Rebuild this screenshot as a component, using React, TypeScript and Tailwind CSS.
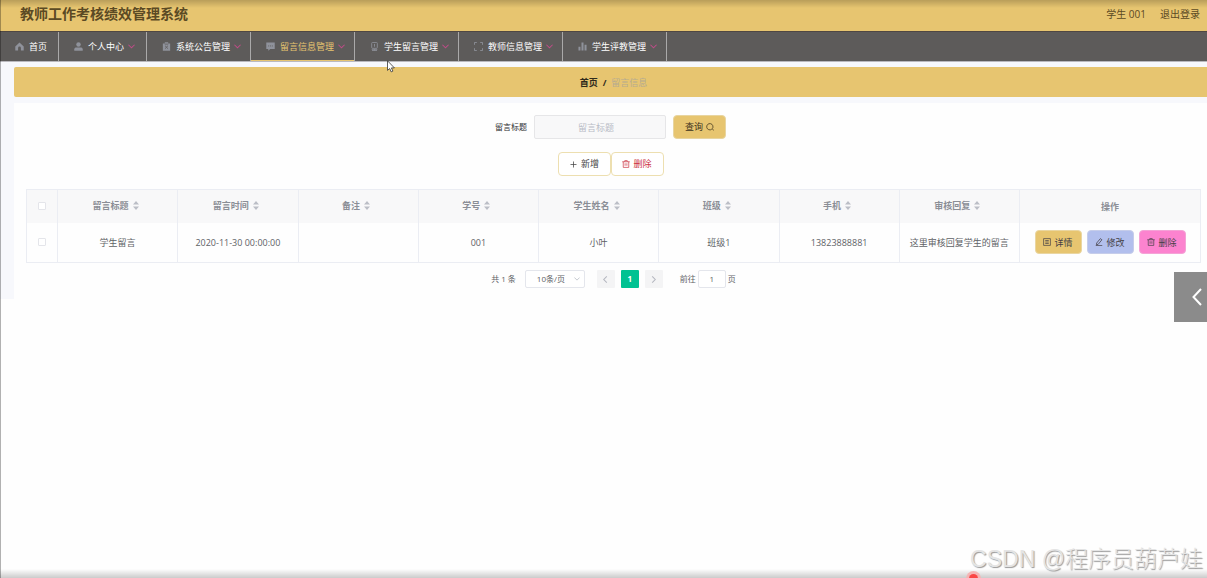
import { useState } from 'react';
import type { ReactNode } from 'react';
import { Plus } from 'lucide-react';

interface MenuItem {
  label: string;
  icon: ReactNode;
  active?: boolean;
  expandable?: boolean;
}

interface Message {
  title: string;
  time: string;
  remark: string;
  studentNo: string;
  studentName: string;
  className: string;
  phone: string;
  reply: string;
}

const menuItems: MenuItem[] = [
  {
    label: '首页',
    icon: <path d="M8 1 15.5 8v7h-5v-4.5a2.5 2.5 0 0 0-5 0V15h-5V8z" fill="currentColor" />,
  },
  {
    label: '个人中心',
    expandable: true,
    icon: (
      <g fill="currentColor">
        <circle cx="8" cy="4.6" r="4" />
        <path d="M.5 15.5v-2.4c0-2.2 1.7-3.4 3.8-3.4h7.4c2.1 0 3.8 1.2 3.8 3.4v2.4z" />
      </g>
    ),
  },
  {
    label: '系统公告管理',
    expandable: true,
    icon: (
      <>
        <path d="M1.5 2.5H5V.5h6v2h3.5v13h-13z" fill="currentColor" />
        <path d="M5.3 6.5l5.4 5.4M10.7 6.5l-5.4 5.4M5 3.8h6" stroke="#5d5b5a" strokeWidth="1.4" fill="none" />
      </>
    ),
  },
  {
    label: '留言信息管理',
    active: true,
    expandable: true,
    icon: (
      <>
        <path d="M.5 1h15v11.3H7.6L4 15.5v-3.2H.5z" fill="currentColor" />
        <path d="M4 7h1.6M7.2 7h1.6M10.4 7H12" stroke="#5d5b5a" strokeWidth="1.6" />
      </>
    ),
  },
  {
    label: '学生留言管理',
    expandable: true,
    icon: (
      <g fill="none" stroke="currentColor" strokeWidth="1.5">
        <rect x="3" y=".8" width="10" height="10.4" rx="1.5" />
        <path d="M8 3.4v5M3 13h10M8 13v2M3.5 15.2h9" />
      </g>
    ),
  },
  {
    label: '教师信息管理',
    expandable: true,
    icon: (
      <path
        d="M.8 5V.8H5M11 .8h4.2V5M15.2 11v4.2H11M5 15.2H.8V11"
        fill="none"
        stroke="currentColor"
        strokeWidth="1.6"
      />
    ),
  },
  {
    label: '学生评教管理',
    expandable: true,
    icon: <path d="M.8 8.5h3.6V15H.8zM6.2 1h3.6v14H6.2zM11.6 5h3.6v10h-3.6z" fill="currentColor" />,
  },
];

const columns: { key: keyof Message; label: string }[] = [
  { key: 'title', label: '留言标题' },
  { key: 'time', label: '留言时间' },
  { key: 'remark', label: '备注' },
  { key: 'studentNo', label: '学号' },
  { key: 'studentName', label: '学生姓名' },
  { key: 'className', label: '班级' },
  { key: 'phone', label: '手机' },
  { key: 'reply', label: '审核回复' },
];

const messages: Message[] = [
  {
    title: '学生留言',
    time: '2020-11-30 00:00:00',
    remark: '',
    studentNo: '001',
    studentName: '小叶',
    className: '班级1',
    phone: '13823888881',
    reply: '这里审核回复学生的留言',
  },
];

function Icon({ children, className = 'size-2' }: { children: ReactNode; className?: string }) {
  return (
    <svg viewBox="0 0 16 16" className={`shrink-0 ${className}`} aria-hidden="true">
      {children}
    </svg>
  );
}

const arrows = {
  down: 'M1 4l7 7 7-7',
  left: 'M11 1L4 8l7 7',
  right: 'M5 1l7 7-7 7',
};

function Arrow({ dir, className }: { dir: keyof typeof arrows; className: string }) {
  return (
    <Icon className={className}>
      <path d={arrows[dir]} fill="none" stroke="currentColor" strokeWidth="2.4" />
    </Icon>
  );
}

const trashPath = (
  <path
    d="M.5 3.5h15M5.5 3.5V1.2h5v2.3M2.5 3.5v11.3h11V3.5M6.2 6.5v5M9.8 6.5v5"
    fill="none"
    stroke="currentColor"
    strokeWidth="1.4"
  />
);

const detailPath = (
  <path d="M1.2 1.2h13.6v13.6H1.2zM4.5 5h7M4.5 8h7M4.5 11h7" fill="none" stroke="currentColor" strokeWidth="1.4" />
);

const editPath = (
  <path
    d="M10.8 1.2l3 2.4-7.4 9-3.6 1 .6-3.6zM1.5 15.2h13"
    fill="none"
    stroke="currentColor"
    strokeWidth="1.5"
  />
);

function TopBar() {
  return (
    <header className="flex h-[31px] items-center justify-between bg-[#e7c570] pr-[7px] pl-5 text-[#5b4a24]">
      <h1 className="pb-1 text-[14px] font-bold">教师工作考核绩效管理系统</h1>
      <div className="flex items-center gap-[14px] pb-[3px] text-[10px]">
        <span>学生 001</span>
        <button type="button">退出登录</button>
      </div>
    </header>
  );
}

function NavMenu() {
  return (
    <nav className="flex h-[31px] border-t border-b border-t-[#4f4743] border-b-[#bab9be] bg-[#5d5b5a] text-[9px]">
      {menuItems.map((item) => (
        <a
          key={item.label}
          href="#"
          className={`flex items-center border-r border-[#aaa9a9] pl-[15px] ${
            item.label.length > 4 ? 'pr-[9px]' : 'pr-[11px]'
          } ${item.active ? 'text-[#e7c570] shadow-[inset_0_-1px_0_#e7c570]' : 'text-white'}`}
        >
          <Icon className="size-[9px] text-[#8f929b]">{item.icon}</Icon>
          <span className="ml-[5px]">{item.label}</span>
          {item.expandable && <Arrow dir="down" className="ml-1 size-[7px] text-[#c04c88]" />}
        </a>
      ))}
    </nav>
  );
}

function SearchForm() {
  return (
    <>
      <form className="flex items-center justify-center gap-[7px]" onSubmit={(e) => e.preventDefault()}>
        <label htmlFor="title" className="text-[8px] text-[#303133]">
          留言标题
        </label>
        <input
          id="title"
          type="text"
          placeholder="留言标题"
          className="h-6 w-[132px] rounded-xs border border-[#e6e6e8] bg-[#f8f8f9] px-2 pr-4 text-center text-[9px] outline-none placeholder:text-[#b9bcc6]"
        />
        <button
          type="submit"
          className="flex h-6 w-[53px] items-center justify-center gap-[3px] rounded-[4px] border border-[#e8d5a0] bg-[#e7c570] text-[9px] text-[#3d331c]"
        >
          查询
          <Icon className="size-2">
            <path
              d="M11.6 12.4a6.3 6.3 0 1 1 1-1L15.4 15"
              fill="none"
              stroke="currentColor"
              strokeWidth="1.5"
            />
          </Icon>
        </button>
      </form>
      <div className="mt-[13px] flex justify-center text-[9px]">
        <button
          type="button"
          className="flex h-6 w-[53px] items-center justify-center gap-[3px] rounded-[4px] border border-[#eddfb0] bg-white text-[#444]"
        >
          <Plus className="size-[9px]" strokeWidth={2} />
          新增
        </button>
        <button
          type="button"
          className="flex h-6 w-[53px] items-center justify-center gap-[3px] rounded-[4px] border border-[#eddfb0] bg-white text-[#cc3342]"
        >
          <Icon>{trashPath}</Icon>
          删除
        </button>
      </div>
    </>
  );
}

function RowButton({ label, color, icon }: { label: string; color: string; icon: ReactNode }) {
  return (
    <button
      type="button"
      className={`flex h-6 w-[47px] items-center justify-center gap-[3px] rounded-[4px] border text-[#443f45] ${color}`}
    >
      <Icon>{icon}</Icon>
      {label}
    </button>
  );
}

const checkboxClass =
  'block mx-auto size-2 appearance-none rounded-[1px] border border-[#e4e5ea] bg-white checked:bg-[#00c292]';

function MessageTable() {
  return (
    <table className="mt-[13px] w-full table-fixed border-collapse border border-[#ebedf3] text-center text-[9px] text-[#606266]">
      <colgroup>
        <col className="w-[31px]" />
        {columns.map((col) => (
          <col key={col.key} />
        ))}
        <col className="w-[181px]" />
      </colgroup>
      <thead className="bg-[#f8f8f9] text-[#8b8e96]">
        <tr className="h-[33px]">
          <th className="border-r border-[#ebedf3]">
            <input type="checkbox" aria-label="全选" className={checkboxClass} />
          </th>
          {columns.map((col) => (
            <th key={col.key} className="border-r border-[#ebedf3] p-0 pr-1 pb-[2px] font-bold">
              <span className="flex items-center justify-center gap-1">
                {col.label}
                <svg viewBox="0 0 6 9" className="h-[9px] w-[6px] text-[#bbbec6]" aria-hidden="true">
                  <path d="M3 0l3 3.5H0zM3 9l3-3.5H0z" fill="currentColor" />
                </svg>
              </span>
            </th>
          ))}
          <th className="font-bold">操作</th>
        </tr>
      </thead>
      <tbody>
        {messages.map((row) => (
          <tr key={row.studentNo} className="h-10">
            <td className="border-r border-[#ebedf3]">
              <input type="checkbox" aria-label={row.title} className={checkboxClass} />
            </td>
            {columns.map((col) => (
              <td key={col.key} className="border-r border-[#ebedf3] whitespace-nowrap">
                {row[col.key]}
              </td>
            ))}
            <td className="p-0">
              <div className="flex justify-center gap-[5px]">
                <RowButton label="详情" color="bg-[#e7c570] border-[#ead6a1]" icon={detailPath} />
                <RowButton label="修改" color="bg-[#b2bfed] border-[#c6cdea]" icon={editPath} />
                <RowButton label="删除" color="bg-[#fc83cf] border-[#f4a3d6]" icon={trashPath} />
              </div>
            </td>
          </tr>
        ))}
      </tbody>
    </table>
  );
}

function Pagination() {
  const [page, setPage] = useState('1');

  return (
    <div className="mt-[7px] flex h-[18px] items-center justify-center text-[8px] text-[#606266]">
      <span>共 1 条</span>
      <div className="relative ml-[9px]">
        <select
          aria-label="每页条数"
          className="block h-[18px] w-[60px] appearance-none rounded-xs border border-[#e4e6ec] bg-white pr-2 text-center leading-none"
        >
          <option>10条/页</option>
        </select>
        <Arrow dir="down" className="pointer-events-none absolute top-[6px] right-[5px] size-[6px] text-[#c0c4cc]" />
      </div>
      <div className="ml-3 flex gap-[6px]">
        <button
          type="button"
          aria-label="上一页"
          className="flex size-[18px] items-center justify-center rounded-[1px] bg-[#f4f4f5] text-[#b4b7bf]"
        >
          <Arrow dir="left" className="size-[7px]" />
        </button>
        <button type="button" className="size-[18px] rounded-[1px] bg-[#00c292] font-bold text-white">
          1
        </button>
        <button
          type="button"
          aria-label="下一页"
          className="flex size-[18px] items-center justify-center rounded-[1px] bg-[#f4f4f5] text-[#b4b7bf]"
        >
          <Arrow dir="right" className="size-[7px]" />
        </button>
      </div>
      <label className="ml-[17px] flex items-center gap-[2px]">
        前往
        <input
          value={page}
          onChange={(e) => setPage(e.target.value)}
          className="h-[18px] w-7 rounded-xs border border-[#e4e6ec] bg-white pb-px text-center outline-none"
        />
        页
      </label>
    </div>
  );
}

export default function App() {
  return (
    <div className="relative min-h-screen overflow-hidden bg-[#fefefe] font-['Open_Sans','Noto_Sans_CJK_SC',sans-serif]">
      <TopBar />
      <NavMenu />

      <main className="bg-[#f7f8fc] pt-[5px] pl-[14px]">
        <div className="flex h-[30px] items-center justify-center gap-[5px] rounded-l-xs bg-[#e7c570] pt-px pl-[6px] text-[9px]">
          <a href="#" className="font-bold text-[#2f2a1c]">
            首页
          </a>
          <span className="font-bold text-[#2f2a1c]">/</span>
          <span className="text-[#b5ab90]">留言信息</span>
        </div>
        <section className="mt-[6px] bg-[#fefefe] pt-3 pb-[11px]">
          <SearchForm />
          <div className="pr-[6px] pl-3">
            <MessageTable />
            <Pagination />
          </div>
        </section>
      </main>

      <button
        type="button"
        aria-label="展开侧栏"
        className="absolute top-[272px] right-0 flex h-[50px] w-[33px] items-center justify-end bg-[#8b8b8b] text-white"
      >
        <svg viewBox="0 0 10 18" className="mr-[5px] h-[18px] w-[10px]" aria-hidden="true">
          <path d="M9 1L1.5 9 9 17" fill="none" stroke="currentColor" strokeWidth="2" />
        </svg>
      </button>

      {/* mouse pointer */}
      <svg viewBox="0 0 8 13" className="absolute top-[60px] left-[387px] h-[13px] w-2" aria-hidden="true">
        <path d="M.5.8v9.6l2.2-1.9 1.5 3.4 1.7-.8-1.5-3.2h3z" fill="#fff" stroke="#333" strokeWidth=".8" />
      </svg>

      <div className="pointer-events-none absolute inset-x-0 top-0 h-2 bg-linear-to-b from-black/20 to-transparent" />
      <div className="pointer-events-none absolute inset-x-0 bottom-0 h-[9px] bg-linear-to-t from-black/20 to-transparent" />
      <div className="pointer-events-none absolute inset-y-0 left-0 w-px bg-black/30" />
      <div className="absolute -bottom-2 left-[966px] flex size-[15px] items-center justify-center rounded-full bg-[#f5b5b5]">
        <span className="size-[9px] rounded-full bg-[#fa4646]" />
      </div>
      <div className="pointer-events-none absolute right-1 bottom-[2px] font-['Liberation_Sans','Noto_Sans_CJK_SC',sans-serif] text-[23px] font-light text-[#e4e4e4] [text-shadow:1px_1px_1px_#999]">
        CSDN @程序员葫芦娃
      </div>
    </div>
  );
}
